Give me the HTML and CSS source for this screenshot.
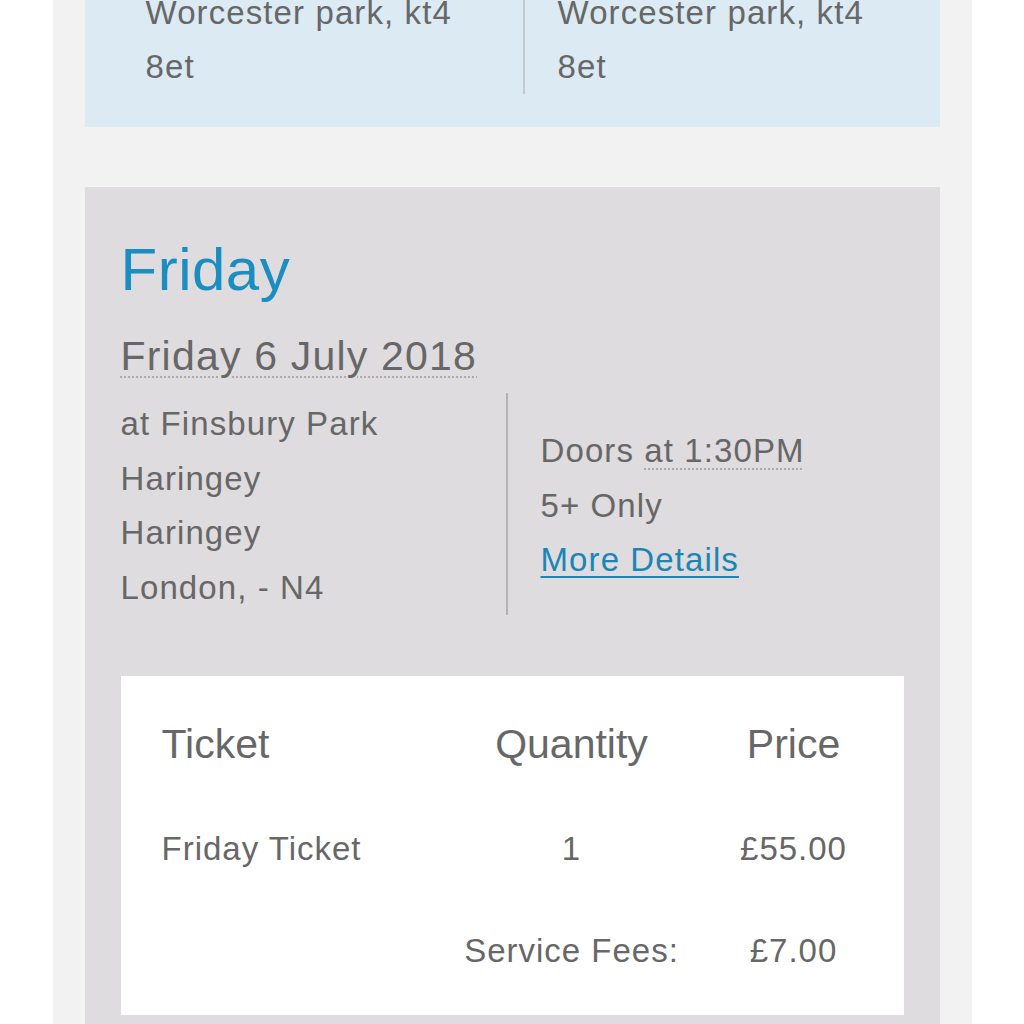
FILE: index.html
```html
<!DOCTYPE html>
<html lang="en">
<head>
  <meta charset="UTF-8">
  <title>Order details</title>
  <link rel="stylesheet" href="styles.css">
</head>
<body>
  <div class="page">
    <div class="venue-card">
      <div class="venue-col">
        <div>Worcester park, kt4</div>
        <div>8et</div>
      </div>
      <div class="venue-col venue-col-right">
        <div>Worcester park, kt4</div>
        <div>8et</div>
      </div>
    </div>

    <div class="event-card">
      <h2 class="event-day">Friday</h2>
      <div class="event-date"><span class="dotted">Friday 6 July 2018</span></div>
      <div class="event-info">
        <div class="event-address">
          <div>at Finsbury Park</div>
          <div>Haringey</div>
          <div>Haringey</div>
          <div>London, - N4</div>
        </div>
        <div class="event-meta">
          <div>Doors <span class="dotted">at 1:30PM</span></div>
          <div>5+ Only</div>
          <div><a href="#" class="more-link">More Details</a></div>
        </div>
      </div>

      <div class="tickets">
        <div class="th">Ticket</div>
        <div class="th center">Quantity</div>
        <div class="th center">Price</div>

        <div class="td">Friday Ticket</div>
        <div class="td center">1</div>
        <div class="td center">£55.00</div>

        <div class="td"></div>
        <div class="td center">Service Fees:</div>
        <div class="td center">£7.00</div>
      </div>
    </div>
  </div>
</body>
</html>
```

FILE: styles.css
```css
body {
  margin: 0;
  background-color: #fff;
  font-family: "Liberation Sans", Arial, sans-serif;
  color: #676767;
}
.page {
  width: 919px;
  margin: -39px auto 0;
  padding: 0 32px 40px;
  box-sizing: border-box;
  background-color: #f2f2f2;
}
.venue-card {
  display: flex;
  background-color: #dceaf3;
  padding: 25px 0 33px;
  font-size: 33px;
  letter-spacing: 1.1px;
  line-height: 54px;
}
.venue-col {
  flex: 0 0 440px;
  padding-left: 61px;
  box-sizing: border-box;
  border-right: 2px solid #c4cbd0;
}
.venue-col-right {
  flex: 1 1 auto;
  border-right: none;
  padding-left: 33px;
}
.event-card {
  margin-top: 60px;
  background-color: #dedcde;
  padding: 49px 36px 40px;
}
.event-day {
  margin: 0;
  font-size: 60px;
  font-weight: normal;
  letter-spacing: 0.5px;
  color: #1b8dc0;
  line-height: 67px;
}
.event-date {
  margin-top: 30px;
  font-size: 41px;
  letter-spacing: 1.2px;
  line-height: 46px;
}
.dotted {
  text-decoration: underline dotted #ababab;
  text-decoration-thickness: 2px;
  text-underline-offset: 6px;
}
.event-info {
  display: flex;
  align-items: center;
  margin-top: 14px;
  font-size: 33px;
  letter-spacing: 1.1px;
  line-height: 54.5px;
}
.event-address {
  width: 385px;
  padding-top: 4px;
  border-right: 2px solid #b3b3b3;
}
.event-meta {
  padding: 4px 0 0 33px;
}
.more-link {
  color: #1a86b5;
  text-decoration-thickness: 2px;
  text-underline-offset: 5px;
}
.tickets {
  display: grid;
  grid-template-columns: 1fr 306px 138px;
  row-gap: 52px;
  margin-top: 61px;
  background-color: #fff;
  padding: 40px 41px 39px;
}
.th {
  font-size: 41px;
  line-height: 56px;
}
.td {
  font-size: 33px;
  letter-spacing: 1px;
  line-height: 50px;
}
.center {
  text-align: center;
}
```
